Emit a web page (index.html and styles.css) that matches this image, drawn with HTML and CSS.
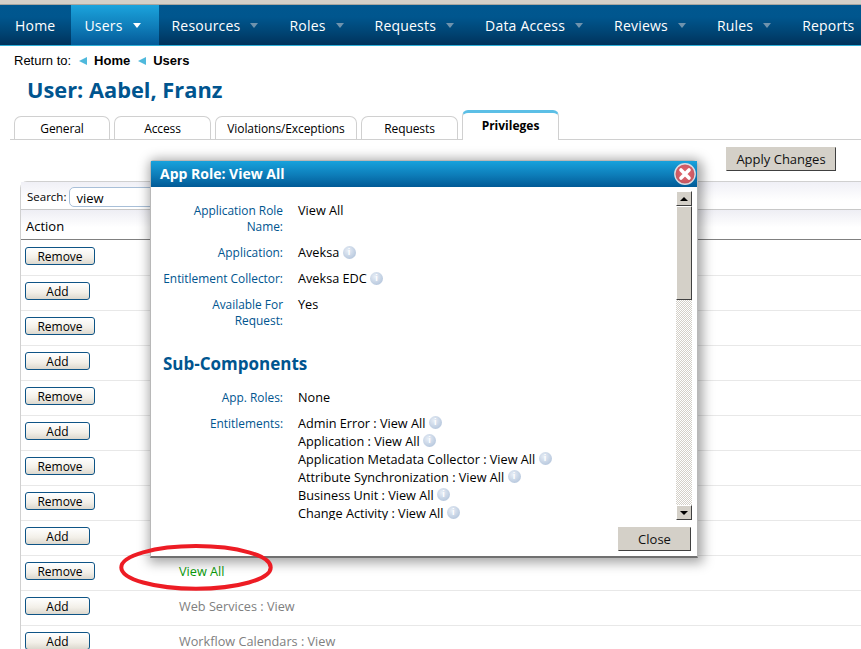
FILE: index.html
```html
<!DOCTYPE html>
<html lang="en">
<head>
<meta charset="utf-8">
<title>User: Aabel, Franz</title>
<link rel="stylesheet" href="styles.css">
</head>
<body>
<div class="page">
  <div class="topstrip"></div>
  <nav class="nav">
    <a class="nav-item first">Home</a>
    <a class="nav-item active">Users<i class="caret"></i></a>
    <a class="nav-item">Resources<i class="caret"></i></a>
    <a class="nav-item">Roles<i class="caret"></i></a>
    <a class="nav-item">Requests<i class="caret"></i></a>
    <a class="nav-item">Data Access<i class="caret"></i></a>
    <a class="nav-item">Reviews<i class="caret"></i></a>
    <a class="nav-item">Rules<i class="caret"></i></a>
    <a class="nav-item">Reports</a>
  </nav>
  <div class="crumbs">
    <span>Return to:</span>
    <i class="crumb-arrow"></i><b>Home</b>
    <i class="crumb-arrow"></i><b>Users</b>
  </div>
  <h1 class="title">User: Aabel, Franz</h1>
  <div class="tabs">
    <div class="tab w0">General</div>
    <div class="tab w1">Access</div>
    <div class="tab w2">Violations/Exceptions</div>
    <div class="tab w1">Requests</div>
    <div class="tab current">Privileges</div>
  </div>
  <div class="actions"><button class="btn-gray apply">Apply Changes</button></div>
  <div class="panel">
    <div class="search-row"><label>Search:</label><div class="search-input">view</div></div>
    <div class="head-row">Action</div>
    <div class="row"><button class="btn remove">Remove</button></div>
    <div class="row"><button class="btn add">Add</button></div>
    <div class="row"><button class="btn remove">Remove</button></div>
    <div class="row"><button class="btn add">Add</button></div>
    <div class="row"><button class="btn remove">Remove</button></div>
    <div class="row"><button class="btn add">Add</button></div>
    <div class="row"><button class="btn remove">Remove</button></div>
    <div class="row"><button class="btn remove">Remove</button></div>
    <div class="row"><button class="btn add">Add</button></div>
    <div class="row"><button class="btn remove">Remove</button><span class="cell green">View All</span></div>
    <div class="row"><button class="btn add">Add</button><span class="cell muted">Web Services : View</span></div>
    <div class="row"><button class="btn add">Add</button><span class="cell muted">Workflow Calendars : View</span></div>
  </div>
</div>

<section class="modal">
  <header class="modal-head">App Role: View All</header>
  <svg class="modal-close" viewBox="0 0 22 22" width="22" height="22" aria-hidden="true">
    <defs>
      <radialGradient id="closeFill" cx="50%" cy="45%" r="60%">
        <stop offset="0" stop-color="#e8666c"/>
        <stop offset="1" stop-color="#bf5560"/>
      </radialGradient>
    </defs>
    <circle cx="11" cy="11" r="10.2" fill="url(#closeFill)" stroke="#dcdde2" stroke-width="1.4"/>
    <path d="M7 7l8 8M15 7l-8 8" stroke="#fff" stroke-width="3.6" stroke-linecap="round"/>
  </svg>
  <div class="modal-main">
    <div class="modal-content">
      <dl class="fields top">
        <dt>Application Role<br>Name:</dt><dd>View All</dd>
        <dt>Application:</dt><dd>Aveksa <i class="info">i</i></dd>
        <dt>Entitlement Collector:</dt><dd>Aveksa EDC <i class="info">i</i></dd>
        <dt>Available For<br>Request:</dt><dd>Yes</dd>
      </dl>
      <h2 class="sub">Sub-Components</h2>
      <dl class="fields">
        <dt>App. Roles:</dt><dd>None</dd>
        <dt>Entitlements:</dt>
        <dd class="list">
          <div>Admin Error : View All <i class="info">i</i></div>
          <div>Application : View All <i class="info">i</i></div>
          <div>Application Metadata Collector : View All <i class="info">i</i></div>
          <div>Attribute Synchronization : View All <i class="info">i</i></div>
          <div>Business Unit : View All <i class="info">i</i></div>
          <div>Change Activity : View All <i class="info">i</i></div>
        </dd>
      </dl>
    </div>
    <div class="scrollbar">
      <div class="sb-btn"><i class="tri up"></i></div>
      <div class="sb-thumb"></div>
      <div class="sb-track"></div>
      <div class="sb-btn"><i class="tri down"></i></div>
    </div>
  </div>
  <footer class="modal-foot"><button class="btn-gray close">Close</button></footer>
</section>

<svg class="circle" width="162" height="56" viewBox="0 0 162 56" aria-hidden="true">
  <ellipse cx="77" cy="25.4" rx="74.7" ry="21.3" fill="none" stroke="#ed1c24" stroke-width="4"/>
</svg>
</body>
</html>
```
FILE: styles.css
```css
* { box-sizing: border-box; }
html, body { margin: 0; padding: 0; }
body {
  position: relative;
  width: 861px;
  height: 649px;
  overflow: hidden;
  background: #fff;
  color: #000;
  font: 12.7px/16px "Open Sans", "Noto Sans", sans-serif;
}
.page { height: 649px; overflow: hidden; }
.topstrip { height: 5px; background: #d4d0c8; border-bottom: 1px solid #a9a69f; }
.nav {
  display: flex;
  height: 41px;
  overflow: hidden;
  background: linear-gradient(#00578f 0, #00568e 30%, #004676 65%, #00335c 100%);
  border-bottom: 1px solid #2fb0d8;
  white-space: nowrap;
}
.nav-item {
  display: flex;
  align-items: center;
  flex: none;
  height: 40px;
  padding: 2px 18px 0 13px;
  color: #fff;
  font-size: 14px;
  letter-spacing: 0.2px;
}
.nav-item.first { padding-left: 15px; padding-right: 16px; }
.nav-item.active { background: linear-gradient(#1ba3dc, #0f7db9 55%, #045a98); }
.caret {
  width: 0;
  height: 0;
  margin: 0 0 2px 10px;
  border: 4.5px solid transparent;
  border-top: 5px solid #6f93ad;
  border-bottom: 0;
}
.active .caret { border-top-color: #fff; }
.crumbs {
  display: flex;
  align-items: center;
  height: 28px;
  padding: 1px 0 0 14px;
  font: 13px/16px "Liberation Sans", Arial, sans-serif;
}
.crumbs b { font-weight: bold; }
.crumb-arrow {
  width: 0;
  height: 0;
  margin: 0 7px 0 8px;
  border: 4px solid transparent;
  border-left: 0;
  border-right: 8px solid #4fb9dc;
}
.title {
  margin: 0;
  padding-left: 27px;
  height: 33px;
  color: #00558f;
  font: bold 21.8px/32px "Open Sans", "Noto Sans", sans-serif;
  white-space: nowrap;
}
.tabs {
  display: flex;
  align-items: flex-end;
  gap: 4px;
  height: 33px;
  margin-left: 10px;
  padding-left: 4px;
  background: linear-gradient(transparent 32px, #d0d0d0 32px);
}
.tab {
  height: 23px;
  margin-bottom: 1px;
  border: 1px solid #d0d0d0;
  border-bottom: 0;
  border-radius: 7px 7px 0 0;
  background: #fff;
  font-size: 12px;
  letter-spacing: -0.1px;
  line-height: 23px;
  text-align: center;
  white-space: nowrap;
}
.w0 { width: 96px; }
.w1 { width: 97px; }
.w2 { width: 142px; }
.current {
  width: 97px;
  height: 30px;
  margin-bottom: 0;
  border-top: 3px solid #5cbfe6;
  border-radius: 6px 6px 0 0;
  font-weight: bold;
  letter-spacing: 0;
  line-height: 26px;
}
.actions {
  display: flex;
  justify-content: flex-end;
  height: 41px;
  padding: 7px 25px 0 0;
}
.btn-gray {
  height: 24px;
  padding: 0;
  background: #d4d0c8;
  border: 1px solid #d4d0c8;
  border-right-color: #404040;
  border-bottom-color: #404040;
  color: #111;
  font: 13px "Open Sans", "Noto Sans", sans-serif;
}
.apply { width: 110px; }
.panel {
  margin-left: 20px;
  border: 1px solid #d0d0d0;
  border-right: 0;
  border-radius: 7px 0 0 0;
}
.search-row {
  display: flex;
  align-items: center;
  gap: 3px;
  height: 28px;
  padding: 3px 0 0 6px;
  background: linear-gradient(#f0f0f6, #fff 70%);
  border-bottom: 1px solid #c8c8c8;
  font-size: 11.5px;
}
.search-input {
  width: 300px;
  height: 20px;
  padding-left: 6px;
  border: 1px solid #a8bfd8;
  border-radius: 5px;
  background: #fff;
  font-size: 13px;
  line-height: 20px;
}
.head-row {
  height: 30px;
  margin-bottom: 1px;
  padding: 8px 0 0 5px;
  background: linear-gradient(#eeeef4, #fff 60%);
  border-bottom: 1px solid #808080;
  font-size: 13px;
}
.row {
  display: flex;
  align-items: center;
  height: 35px;
  padding: 0 0 4px 4px;
  border-bottom: 1px solid #e8e8e8;
}
.btn {
  height: 18px;
  padding: 0;
  border: 1px solid #0e5486;
  border-radius: 3px;
  background: linear-gradient(#fff, #f2efe8 60%, #dcd8ce);
  color: #000;
  font: 12px/15px "Open Sans", "Noto Sans", sans-serif;
}
.remove { width: 70px; }
.add { width: 65px; margin-right: 5px; }
.cell { margin: 0 0 1px 84px; font-size: 12.7px; }
.green { color: #0a9a0a; }
.muted { color: #808080; }
.modal {
  position: absolute;
  left: 150px;
  top: 160px;
  width: 548px;
  height: 398px;
  display: flex;
  flex-direction: column;
  background: #fff;
  border: 1px solid #b8b8b8;
  border-bottom: 2px solid #707070;
  border-top-left-radius: 4px;
  border-top-right-radius: 6px;
  box-shadow: 2px 2px 12px 3px rgba(0, 0, 0, 0.35);
}
.modal-head {
  flex: none;
  height: 26px;
  padding-left: 9px;
  background: linear-gradient(#17a2dc, #0d7cb8 55%, #015a96);
  color: #fff;
  font: bold 14px/25px "Open Sans", "Noto Sans", sans-serif;
}
.modal-close { position: absolute; right: 1px; top: 2px; }
.modal-main {
  display: flex;
  flex: none;
  height: 333px;
}
.modal-content {
  flex: 1;
  min-width: 0;
  overflow: hidden;
  padding-left: 12px;
}
.fields {
  display: grid;
  grid-template-columns: 120px 1fr;
  column-gap: 15px;
  row-gap: 10px;
  margin: 0;
}
.fields.top { padding-top: 15px; }
dt { color: #00558f; font-size: 11.9px; text-align: right; white-space: nowrap; }
dd { margin: 0; }
.info {
  display: inline-block;
  width: 13px;
  height: 13px;
  margin-top: 1.5px;
  border-radius: 50%;
  background: radial-gradient(circle at 40% 35%, #e8eef6, #a8bcd6);
  color: #fff;
  font: bold 9px/13px "Liberation Sans", sans-serif;
  text-align: center;
  vertical-align: top;
}
.sub {
  margin: 24px 0 13px;
  color: #00558f;
  font: bold 17px/24px "Open Sans", "Noto Sans", sans-serif;
}
.list { margin-top: -1px; line-height: 18px; }
.scrollbar {
  display: flex;
  flex: none;
  flex-direction: column;
  width: 16px;
  margin: 4px 5px 0 0;
}
.sb-btn {
  display: flex;
  align-items: center;
  justify-content: center;
  flex: none;
  height: 15px;
  background: #d4d0c8;
  border: 1px solid #fff;
  border-right-color: #404040;
  border-bottom-color: #404040;
}
.tri { width: 0; height: 0; border: 4px solid transparent; }
.tri.up { border-top: 0; border-bottom: 4px solid #000; }
.tri.down { border-bottom: 0; border-top: 4px solid #000; }
.sb-thumb {
  flex: none;
  height: 94px;
  background: #d4d0c8;
  border: 1px solid #fff;
  border-right-color: #404040;
  border-bottom-color: #404040;
}
.sb-track {
  flex: 1;
  background: repeating-conic-gradient(#d4d0c8 0 25%, #fff 0 50%) 0 0 / 2px 2px;
}
.modal-foot {
  flex: 1;
  display: flex;
  justify-content: flex-end;
  padding: 7px 6px 0 0;
}
.close { width: 73px; }
.circle { position: absolute; left: 119px; top: 542px; }
```
